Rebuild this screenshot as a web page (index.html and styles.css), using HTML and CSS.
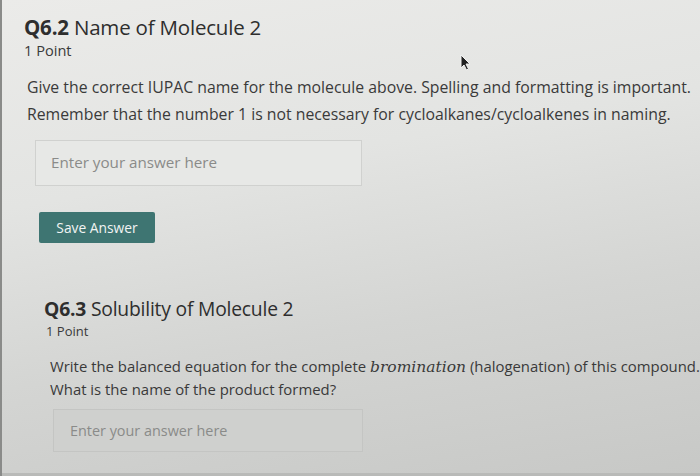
FILE: index.html
```html
<!DOCTYPE html>
<html>
<head>
<meta charset="utf-8">
<link rel="stylesheet" href="styles.css">
</head>
<body>
<div class="page">
  <section class="q q1">
    <h2 class="title"><b>Q6.2</b> Name of Molecule 2</h2>
    <div class="points">1 Point</div>
    <p class="prompt">Give the correct IUPAC name for the molecule above. Spelling and formatting is important.<br>Remember that the number 1 is not necessary for cycloalkanes/cycloalkenes in naming.</p>
    <div class="answer">Enter your answer here</div>
    <button class="save">Save Answer</button>
  </section>
  <section class="q q2">
    <h2 class="title"><b>Q6.3</b> Solubility of Molecule 2</h2>
    <div class="points">1 Point</div>
    <p class="prompt">Write the balanced equation for the complete <i class="math">bromination</i> (halogenation) of this compound.<br>What is the name of the product formed?</p>
    <div class="answer">Enter your answer here</div>
  </section>
  <svg class="cursor" width="14" height="18" viewBox="0 0 14 18"><path d="M3 1 L3 14 L6 11 L8.5 16 L10.5 15 L8 10 L12 10 Z" fill="#222" stroke="#f2f2f2" stroke-width="1"/></svg>
  <div class="bottom-strip"></div>
</div>
</body>
</html>
```
FILE: styles.css
```css
html, body {
  margin: 0;
  padding: 0;
}
body {
  width: 700px;
  height: 476px;
  overflow: hidden;
  font-family: "Open Sans", Lato, sans-serif;
  color: #343434;
}
.page {
  position: relative;
  width: 700px;
  height: 476px;
  box-sizing: border-box;
  border-left: 2px solid #8a8b89;
  background: linear-gradient(170deg, #ebebe9 0%, #e3e4e2 35%, #d4d5d3 65%, #c7c8c6 100%);
  overflow: hidden;
}
.q1 {
  padding: 15px 0 0 22px;
}
.title {
  margin: 0;
  font-weight: 400;
  font-size: 20.5px;
  line-height: 24px;
  color: #2e2e2e;
  white-space: nowrap;
  letter-spacing: -0.2px;
}
.title b {
  font-weight: 700;
}
.points {
  font-size: 14.6px;
  line-height: 18px;
  margin-top: 2px;
  color: #3a3a3a;
}
.prompt {
  margin: 0;
  white-space: nowrap;
  color: #3a3a3a;
}
.q1 .prompt {
  margin-top: 15px;
  margin-left: 3px;
  font-size: 15.8px;
  line-height: 27px;
}
.answer {
  box-sizing: border-box;
  border: 1px solid #d0d1cf;
  background: #e7e8e6;
  color: #8a8b89;
  white-space: nowrap;
}
.q1 .answer {
  margin-top: 12px;
  margin-left: 11px;
  width: 327px;
  height: 46px;
  padding: 11px 0 0 15px;
  font-size: 15.2px;
}
.save {
  display: block;
  margin-top: 26px;
  margin-left: 15px;
  width: 116px;
  height: 31px;
  border: none;
  border-radius: 2px;
  background: #3e7572;
  color: #f2f4f3;
  font-family: "Open Sans", Lato, sans-serif;
  font-size: 13.8px;
  padding: 0;
}
.q2 {
  padding: 55px 0 0 42px;
}
.q2 .title {
  font-size: 19.3px;
  line-height: 22px;
}
.q2 .points {
  font-size: 13px;
  margin-top: 2px;
  margin-left: 2px;
}
.q2 .prompt {
  margin-top: 15px;
  margin-left: 6px;
  font-size: 14.9px;
  line-height: 22px;
}
.math {
  font-family: "DejaVu Serif", "Liberation Serif", serif;
  font-style: italic;
  font-size: 15.5px;
}
.q2 .answer {
  margin-top: 9px;
  margin-left: 9px;
  width: 310px;
  height: 43px;
  padding: 11px 0 0 16px;
  font-size: 14.4px;
  background: #cfd0ce;
  border-color: #c4c5c3;
}
.cursor {
  position: absolute;
  left: 456px;
  top: 54px;
}
.bottom-strip {
  position: absolute;
  left: 0;
  right: 0;
  bottom: 0;
  height: 3px;
  background: #b9bab8;
}
```
